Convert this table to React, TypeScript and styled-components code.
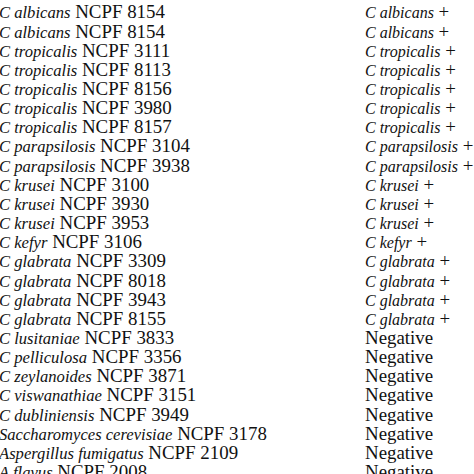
import React from "react";
import styled, { createGlobalStyle } from "styled-components";

const GlobalStyle = createGlobalStyle`
  html, body {
    margin: 0;
    padding: 0;
    background: #ffffff;
    overflow: hidden;
  }
`;

const Table = styled.div`
  display: grid;
  grid-template-columns: 366px 1fr;
  grid-auto-rows: 19.16px;
  margin: 2.35px 0 0 -1px;
  font-family: "Liberation Serif", "Times New Roman", Times, serif;
  font-size: 18.9px;
  line-height: 19.16px;
  color: #111111;
  white-space: nowrap;
`;

const Cell = styled.div`
  overflow: visible;
`;

const Species = styled.i<{ $narrow?: boolean }>`
  font-style: italic;
  font-size: ${(p) => (p.$narrow ? "16px" : "16.6px")};
`;

type Row = { genus: string; strain: string; result: string; positive: boolean };

const rows: Row[] = [
  { genus: "C albicans", strain: "NCPF 8154", result: "C albicans", positive: true },
  { genus: "C albicans", strain: "NCPF 8154", result: "C albicans", positive: true },
  { genus: "C tropicalis", strain: "NCPF 3111", result: "C tropicalis", positive: true },
  { genus: "C tropicalis", strain: "NCPF 8113", result: "C tropicalis", positive: true },
  { genus: "C tropicalis", strain: "NCPF 8156", result: "C tropicalis", positive: true },
  { genus: "C tropicalis", strain: "NCPF 3980", result: "C tropicalis", positive: true },
  { genus: "C tropicalis", strain: "NCPF 8157", result: "C tropicalis", positive: true },
  { genus: "C parapsilosis", strain: "NCPF 3104", result: "C parapsilosis", positive: true },
  { genus: "C parapsilosis", strain: "NCPF 3938", result: "C parapsilosis", positive: true },
  { genus: "C krusei", strain: "NCPF 3100", result: "C krusei", positive: true },
  { genus: "C krusei", strain: "NCPF 3930", result: "C krusei", positive: true },
  { genus: "C krusei", strain: "NCPF 3953", result: "C krusei", positive: true },
  { genus: "C kefyr", strain: "NCPF 3106", result: "C kefyr", positive: true },
  { genus: "C glabrata", strain: "NCPF 3309", result: "C glabrata", positive: true },
  { genus: "C glabrata", strain: "NCPF 8018", result: "C glabrata", positive: true },
  { genus: "C glabrata", strain: "NCPF 3943", result: "C glabrata", positive: true },
  { genus: "C glabrata", strain: "NCPF 8155", result: "C glabrata", positive: true },
  { genus: "C lusitaniae", strain: "NCPF 3833", result: "Negative", positive: false },
  { genus: "C pelliculosa", strain: "NCPF 3356", result: "Negative", positive: false },
  { genus: "C zeylanoides", strain: "NCPF 3871", result: "Negative", positive: false },
  { genus: "C viswanathiae", strain: "NCPF 3151", result: "Negative", positive: false },
  { genus: "C dubliniensis", strain: "NCPF 3949", result: "Negative", positive: false },
  { genus: "Saccharomyces cerevisiae", strain: "NCPF 3178", result: "Negative", positive: false },
  { genus: "Aspergillus fumigatus", strain: "NCPF 2109", result: "Negative", positive: false },
  { genus: "A flavus", strain: "NCPF 2008", result: "Negative", positive: false },
];

export default function App() {
  return (
    <>
      <GlobalStyle />
      <Table>
        {rows.map((r, i) => (
          <React.Fragment key={i}>
            <Cell>
              <Species>{r.genus}</Species> {r.strain}
            </Cell>
            <Cell>
              {r.positive ? (
                <>
                  <Species $narrow>{r.result}</Species> +
                </>
              ) : (
                r.result
              )}
            </Cell>
          </React.Fragment>
        ))}
      </Table>
    </>
  );
}
